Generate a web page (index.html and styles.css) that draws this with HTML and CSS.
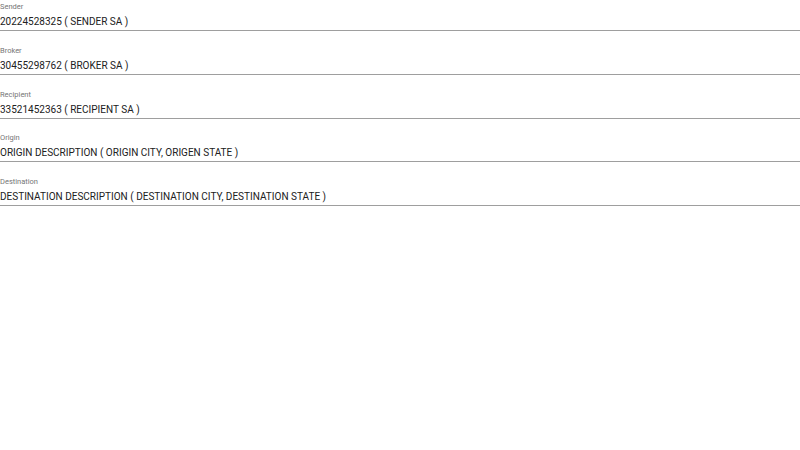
FILE: index.html
```html
<!DOCTYPE html>
<html lang="en">
<head>
  <meta charset="UTF-8" />
  <meta name="viewport" content="width=device-width, initial-scale=1.0" />
  <title>Shipment</title>
  <link rel="stylesheet" href="styles.css">
</head>
<body>
  <div class="fields">
    <div class="field">
      <label>Sender</label>
      <div class="value">20224528325 ( SENDER SA )</div>
    </div>
    <div class="field">
      <label>Broker</label>
      <div class="value">30455298762 ( BROKER SA )</div>
    </div>
    <div class="field">
      <label>Recipient</label>
      <div class="value">33521452363 ( RECIPIENT SA )</div>
    </div>
    <div class="field">
      <label>Origin</label>
      <div class="value">ORIGIN DESCRIPTION ( ORIGIN CITY, ORIGEN STATE )</div>
    </div>
    <div class="field">
      <label>Destination</label>
      <div class="value">DESTINATION DESCRIPTION ( DESTINATION CITY, DESTINATION STATE )</div>
    </div>
  </div>
</body>
</html>
```

FILE: styles.css
```css
body {
  margin: 0;
  background: white;
  font-family: Roboto, 'Noto Sans', sans-serif;
}
.fields {
  display: flex;
  flex-direction: column;
  gap: 12.75px;
}
.field {
  display: flex;
  flex-direction: column;
  border-bottom: 1px solid #9e9e9e;
}
label {
  font-size: 7.5px;
  line-height: 13px;
  color: #757575;
}
.value {
  font-size: 10px;
  line-height: 17px;
  color: #212121;
}
```
